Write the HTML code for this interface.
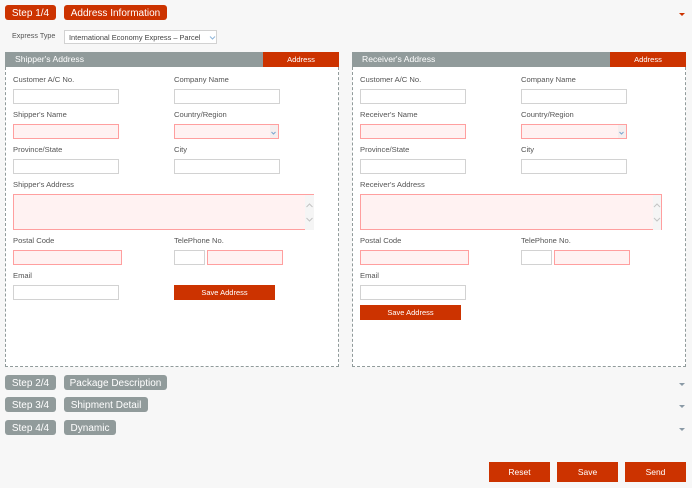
<!DOCTYPE html>
<html><head><meta charset="utf-8">
<style>
html,body{margin:0;padding:0}
body{width:692px;height:488px;background:#f7f7f7;position:relative;overflow:hidden;font-family:"Liberation Sans",sans-serif;color:#555}
div,span{position:absolute;box-sizing:border-box}
.pill{height:15px;border-radius:3px;color:#fff;font-size:10px;line-height:17px;text-align:center;white-space:nowrap}
.r{background:#cc3300}
.g{background:#919b9b}
.hd{background:#919b9b;height:15px;top:52px;width:334px;color:#fff;font-size:8.6px;line-height:15px;padding-left:10px}
.tab{background:#cc3300;height:15px;top:52px;width:76px;color:#fff;font-size:7.6px;line-height:15px;text-align:center}
.box{top:67px;width:334px;height:300px;background:#fff;border:1px dashed #919b9b;border-top:0}
.l{font-size:7.6px;line-height:10px;color:#555;white-space:nowrap}
.i{background:#fff;border:1px solid #d2d2d2;height:15px}
.q{background:#fff2f2;border:1px solid #ff9f9f;height:15px}
.btn{background:#cc3300;color:#fff;font-size:7.5px;text-align:center;line-height:15px;height:15px;width:101px}
.bb{background:#cc3300;color:#fff;font-size:8.5px;text-align:center;line-height:21px;height:20px;width:61px;top:462px}
.arr{width:0;height:0;border-left:3.5px solid transparent;border-right:3.5px solid transparent;border-top:3.5px solid #8a9aa6}
.sb{background:#f5f5f5}
</style></head><body>
<div class="pill r" style="left:5px;top:5px;width:51px">Step 1/4</div>
<div class="pill r" style="left:64px;top:5px;width:103px">Address Information</div>
<div class="arr" style="left:679px;top:13px;border-top-color:#cc3300"></div>

<div class="l" style="left:12px;top:31px;font-size:7.2px">Express Type</div>
<div style="left:64px;top:30px;width:153px;height:14px;background:#fff;border:1px solid #d2d2d2;font-size:7.4px;line-height:13px;padding-left:4px;color:#444;white-space:nowrap">International Economy Express – Parcel
<svg style="position:absolute;left:143px;top:2px" width="9" height="9"><path d="M2 3.5L4.5 6L7 3.5" fill="none" stroke="#8fb6da" stroke-width="1"/></svg></div>

<div class="hd" style="left:5px">Shipper's Address</div>
<div class="tab" style="left:263px">Address</div>
<div class="box" style="left:5px"></div>
<div class="l" style="left:13px;top:75px">Customer A/C No.</div>
<div class="l" style="left:174px;top:75px">Company Name</div>
<div class="i" style="left:13px;top:89px;width:106px"></div>
<div class="i" style="left:174px;top:89px;width:106px"></div>
<div class="l" style="left:13px;top:110px">Shipper's Name</div>
<div class="l" style="left:174px;top:110px">Country/Region</div>
<div class="q" style="left:13px;top:124px;width:106px"></div>
<div class="q" style="left:174px;top:124px;width:105px"><div class="sb" style="left:95px;top:0;width:8px;height:13px;background:#f5eeee"></div><svg style="position:absolute;left:94px;top:3px" width="9" height="9"><path d="M2.5 4L4.5 6L6.5 4" fill="none" stroke="#7aa6cf" stroke-width="1"/></svg></div>
<div class="l" style="left:13px;top:145px">Province/State</div>
<div class="l" style="left:174px;top:145px">City</div>
<div class="i" style="left:13px;top:159px;width:106px"></div>
<div class="i" style="left:174px;top:159px;width:106px"></div>
<div class="l" style="left:13px;top:180px">Shipper's Address</div>
<div class="q" style="left:13px;top:194px;width:301px;height:36px;border-right:0"></div>
<div class="sb" style="left:305px;top:195px;width:9px;height:35px"></div>
<svg style="position:absolute;left:305px;top:200px" width="9" height="26"><path d="M1.5 7L4.5 4L7.5 7M1.5 18L4.5 21L7.5 18" fill="none" stroke="#c4c4c4" stroke-width="1"/></svg>
<div class="l" style="left:13px;top:236px">Postal Code</div>
<div class="l" style="left:174px;top:236px">TelePhone No.</div>
<div class="q" style="left:13px;top:250px;width:109px"></div>
<div class="i" style="left:174px;top:250px;width:31px"></div>
<div class="q" style="left:207px;top:250px;width:76px"></div>
<div class="l" style="left:13px;top:271px">Email</div>
<div class="i" style="left:13px;top:285px;width:106px"></div>
<div class="btn" style="left:174px;top:285px">Save Address</div>

<div class="hd" style="left:352px">Receiver's Address</div>
<div class="tab" style="left:610px">Address</div>
<div class="box" style="left:352px"></div>
<div class="l" style="left:360px;top:75px">Customer A/C No.</div>
<div class="l" style="left:521px;top:75px">Company Name</div>
<div class="i" style="left:360px;top:89px;width:106px"></div>
<div class="i" style="left:521px;top:89px;width:106px"></div>
<div class="l" style="left:360px;top:110px">Receiver's Name</div>
<div class="l" style="left:521px;top:110px">Country/Region</div>
<div class="q" style="left:360px;top:124px;width:106px"></div>
<div class="q" style="left:521px;top:124px;width:106px"><div class="sb" style="left:96px;top:0;width:8px;height:13px;background:#f5eeee"></div><svg style="position:absolute;left:95px;top:3px" width="9" height="9"><path d="M2.5 4L4.5 6L6.5 4" fill="none" stroke="#7aa6cf" stroke-width="1"/></svg></div>
<div class="l" style="left:360px;top:145px">Province/State</div>
<div class="l" style="left:521px;top:145px">City</div>
<div class="i" style="left:360px;top:159px;width:106px"></div>
<div class="i" style="left:521px;top:159px;width:106px"></div>
<div class="l" style="left:360px;top:180px">Receiver's Address</div>
<div class="q" style="left:360px;top:194px;width:302px;height:36px"></div>
<div class="sb" style="left:653px;top:195px;width:8px;height:35px"></div>
<svg style="position:absolute;left:653px;top:200px" width="9" height="26"><path d="M1 7L4 4L7 7M1 18L4 21L7 18" fill="none" stroke="#c4c4c4" stroke-width="1"/></svg>
<div class="l" style="left:360px;top:236px">Postal Code</div>
<div class="l" style="left:521px;top:236px">TelePhone No.</div>
<div class="q" style="left:360px;top:250px;width:109px"></div>
<div class="i" style="left:521px;top:250px;width:31px"></div>
<div class="q" style="left:554px;top:250px;width:76px"></div>
<div class="l" style="left:360px;top:271px">Email</div>
<div class="i" style="left:360px;top:285px;width:106px"></div>
<div class="btn" style="left:360px;top:305px">Save Address</div>

<div class="pill g" style="left:5px;top:375px;width:51px">Step 2/4</div>
<div class="pill g" style="left:64px;top:375px;width:103px">Package Description</div>
<div class="arr" style="left:679px;top:383px"></div>
<div class="pill g" style="left:5px;top:397px;width:51px">Step 3/4</div>
<div class="pill g" style="left:64px;top:397px;width:84px">Shipment Detail</div>
<div class="arr" style="left:679px;top:405px"></div>
<div class="pill g" style="left:5px;top:420px;width:51px">Step 4/4</div>
<div class="pill g" style="left:64px;top:420px;width:52px">Dynamic</div>
<div class="arr" style="left:679px;top:428px"></div>

<div class="bb" style="left:489px">Reset</div>
<div class="bb" style="left:557px">Save</div>
<div class="bb" style="left:625px">Send</div>
</body></html>
